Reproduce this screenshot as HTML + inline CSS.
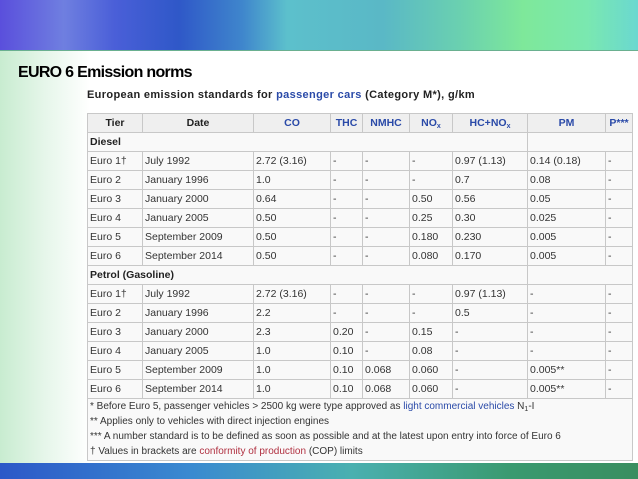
<!DOCTYPE html>
<html><head><style>
body{margin:0;width:638px;height:479px;position:relative;overflow:hidden;background:#fff;font-family:"Liberation Sans",Arial,sans-serif}
.top{position:absolute;left:0;top:0;width:638px;height:50px;background:linear-gradient(90deg,#5a4fdc 0%,#6f7fe0 10%,#4a5fd8 18%,#2f58c8 28%,#3f86cc 38%,#5cc0cc 45%,#5ab8c6 60%,#6ad0b0 72%,#7ee89a 82%,#7ae8b0 92%,#6ad8d0 100%);border-bottom:1px solid #6ab090}
.left{position:absolute;left:0;top:51px;width:90px;height:412px;background:linear-gradient(90deg,#c8ecd0 0%,#e6f6ea 50%,#fff 100%)}
.bot{position:absolute;left:0;top:463px;width:638px;height:16px;background:linear-gradient(90deg,#2c58c8 0%,#3a8ad0 30%,#4ab0b0 55%,#3a9a70 80%,#3a8e60 100%)}
h1{position:absolute;left:18px;top:64px;margin:0;font-size:16px;font-weight:bold;color:#000;letter-spacing:-0.7px}
.cap{position:absolute;left:87px;top:89px;font-size:11px;font-weight:bold;color:#222;letter-spacing:0.35px}
.cap span{color:#2a4aa8}
table{position:absolute;left:87px;top:113px;width:545px;border-collapse:collapse;table-layout:fixed;font-size:10.5px;color:#333;background:#f9f9f9}
td,th{border:1px solid #c8c8c8;padding:0 2px;height:18px;white-space:nowrap;overflow:hidden}
th{background:#efefef;font-weight:bold;color:#222;height:18px}
th.b{color:#2a4aa8}
.g td{font-weight:bold;color:#222}
.f td{font-size:10px;height:auto;line-height:15px;padding:0 2px 1px;color:#333}
.f span{color:#2a4aa8}.f em{font-style:normal;color:#b03040}
sub{font-size:7px;line-height:0;vertical-align:-2px}
</style></head><body>
<div class="top"></div><div class="left"></div><div class="bot"></div>
<h1>EURO 6 Emission norms</h1>
<div class="cap">European emission standards for <span>passenger cars</span> (Category M*), g/km</div>
<table>
<colgroup><col style="width:55px"><col style="width:111px"><col style="width:77px"><col style="width:32px"><col style="width:47px"><col style="width:43px"><col style="width:75px"><col style="width:78px"><col style="width:27px"></colgroup>
<tr><th>Tier</th><th>Date</th><th class="b">CO</th><th class="b">THC</th><th class="b">NMHC</th><th class="b">NO<sub>x</sub></th><th class="b">HC+NO<sub>x</sub></th><th class="b">PM</th><th class="b">P***</th></tr>
<tr class="g"><td colspan="7">Diesel</td><td colspan="2"></td></tr>
<tr><td>Euro 1†</td><td>July 1992</td><td>2.72 (3.16)</td><td>-</td><td>-</td><td>-</td><td>0.97 (1.13)</td><td>0.14 (0.18)</td><td>-</td></tr>
<tr><td>Euro 2</td><td>January 1996</td><td>1.0</td><td>-</td><td>-</td><td>-</td><td>0.7</td><td>0.08</td><td>-</td></tr>
<tr><td>Euro 3</td><td>January 2000</td><td>0.64</td><td>-</td><td>-</td><td>0.50</td><td>0.56</td><td>0.05</td><td>-</td></tr>
<tr><td>Euro 4</td><td>January 2005</td><td>0.50</td><td>-</td><td>-</td><td>0.25</td><td>0.30</td><td>0.025</td><td>-</td></tr>
<tr><td>Euro 5</td><td>September 2009</td><td>0.50</td><td>-</td><td>-</td><td>0.180</td><td>0.230</td><td>0.005</td><td>-</td></tr>
<tr><td>Euro 6</td><td>September 2014</td><td>0.50</td><td>-</td><td>-</td><td>0.080</td><td>0.170</td><td>0.005</td><td>-</td></tr>
<tr class="g"><td colspan="7">Petrol (Gasoline)</td><td colspan="2"></td></tr>
<tr><td>Euro 1†</td><td>July 1992</td><td>2.72 (3.16)</td><td>-</td><td>-</td><td>-</td><td>0.97 (1.13)</td><td>-</td><td>-</td></tr>
<tr><td>Euro 2</td><td>January 1996</td><td>2.2</td><td>-</td><td>-</td><td>-</td><td>0.5</td><td>-</td><td>-</td></tr>
<tr><td>Euro 3</td><td>January 2000</td><td>2.3</td><td>0.20</td><td>-</td><td>0.15</td><td>-</td><td>-</td><td>-</td></tr>
<tr><td>Euro 4</td><td>January 2005</td><td>1.0</td><td>0.10</td><td>-</td><td>0.08</td><td>-</td><td>-</td><td>-</td></tr>
<tr><td>Euro 5</td><td>September 2009</td><td>1.0</td><td>0.10</td><td>0.068</td><td>0.060</td><td>-</td><td>0.005**</td><td>-</td></tr>
<tr><td>Euro 6</td><td>September 2014</td><td>1.0</td><td>0.10</td><td>0.068</td><td>0.060</td><td>-</td><td>0.005**</td><td>-</td></tr>
<tr class="f"><td colspan="9">* Before Euro 5, passenger vehicles &gt; 2500 kg were type approved as <span>light commercial vehicles</span> N<sub>1</sub>-I<br>** Applies only to vehicles with direct injection engines<br>*** A number standard is to be defined as soon as possible and at the latest upon entry into force of Euro 6<br>† Values in brackets are <em>conformity of production</em> (COP) limits</td></tr>
</table>
</body></html>
